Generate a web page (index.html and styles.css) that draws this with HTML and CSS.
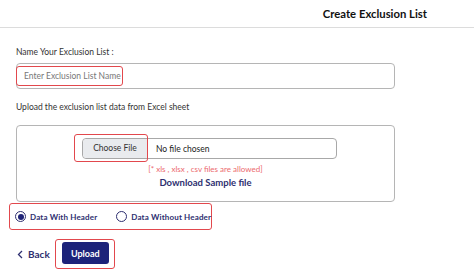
FILE: index.html
```html
<!DOCTYPE html>
<html lang="en">
<head>
    <meta charset="UTF-8">
    <title>Create Exclusion List</title>
    <link rel="stylesheet" href="styles.css">
</head>
<body>
    <header class="topbar">
        <h1>Create Exclusion List</h1>
    </header>

    <div class="content">
        <label class="field-label">Name Your Exclusion List :</label>
        <div class="text-field">
            <span class="mark placeholder">Enter Exclusion List Name</span>
        </div>

        <label class="field-label second">Upload the exclusion list data from Excel sheet</label>
        <div class="upload-box">
            <div class="file-input">
                <span class="choose-btn">Choose File</span>
                <span class="file-name">No file chosen</span>
            </div>
            <p class="hint">[* xls , xlsx , csv files are allowed]</p>
            <a href="#" class="sample-link">Download Sample file</a>
        </div>

        <div class="radio-group">
            <span class="radio checked"></span>
            <span class="radio-label">Data With Header</span>
            <span class="radio"></span>
            <span class="radio-label last">Data Without Header</span>
        </div>

        <div class="actions">
            <a href="#" class="back">
                <svg width="6" height="9" viewBox="0 0 6 9"><path d="M5 1 L1.5 4.5 L5 8" fill="none" stroke="#2e2f70" stroke-width="1.3"/></svg>
                Back
            </a>
            <span class="btn-mark"><button class="upload-btn">Upload</button></span>
        </div>
    </div>
</body>
</html>
```

FILE: styles.css
```css
body {
    margin: 0;
    font-family: "Lato", "Noto Sans", sans-serif;
    background: #fff;
    color: #333;
}
.topbar {
    height: 27px;
    border-bottom: 1px solid #dcdcdc;
    display: flex;
    justify-content: flex-end;
    align-items: center;
    padding-right: 47px;
}
.topbar h1 {
    margin: 0;
    font-size: 11.3px;
    font-weight: 700;
    color: #111;
}
.content {
    width: 379px;
    padding: 18px 0 0 16px;
}
.field-label {
    display: block;
    font-size: 8.5px;
    line-height: 12px;
    color: #333;
    white-space: nowrap;
}
.field-label.second {
    margin-top: 12px;
}
.text-field {
    margin-top: 5px;
    height: 24px;
    border: 1px solid #b5b5b5;
    border-radius: 4px;
    display: flex;
    align-items: center;
}
.mark {
    border: 1.5px solid #e2484d;
    border-radius: 3px;
}
.placeholder {
    height: 18px;
    width: 98px;
    margin-left: -1px;
    padding-left: 7px;
    font-size: 8.5px;
    line-height: 18px;
    color: #777;
    white-space: nowrap;
}
.upload-box {
    margin-top: 12px;
    height: 75px;
    border: 1px solid #b5b5b5;
    border-radius: 4px;
    display: flex;
    flex-direction: column;
    align-items: center;
}
.file-input {
    margin-top: 12px;
    margin-left: 8px;
    width: 253px;
    height: 19px;
    border: 1px solid #a8a8a8;
    border-radius: 4px;
    display: flex;
    align-items: center;
    font-size: 8.5px;
}
.choose-btn {
    position: relative;
    width: 64px;
    height: 19px;
    line-height: 19px;
    text-align: center;
    background: #e9ebee;
    border-right: 1px solid #a8a8a8;
    border-radius: 4px 0 0 4px;
    color: #333;
}
.choose-btn::after {
    content: "";
    position: absolute;
    left: -9px;
    top: -5px;
    right: -1px;
    bottom: -4px;
    border: 1.5px solid #e2484d;
    border-radius: 3px;
}
.file-name {
    margin-left: 8px;
    color: #222;
}
.hint {
    margin: 5px 0 0;
    font-size: 8px;
    line-height: 10px;
    color: #ec6a6e;
    white-space: nowrap;
}
.sample-link {
    margin-top: 2px;
    font-size: 9.5px;
    line-height: 13px;
    color: #2e2f70;
    font-weight: 700;
    text-decoration: none;
    white-space: nowrap;
}
.radio-group {
    margin-left: -7px;
    margin-top: 1px;
    width: max-content;
    height: 25px;
    border: 1.5px solid #e2484d;
    border-radius: 3px;
    display: flex;
    align-items: center;
    padding-left: 5px;
    font-size: 8px;
    color: #2e2f70;
}
.radio {
    width: 9px;
    height: 9px;
    border: 1.5px solid #2e2f70;
    border-radius: 50%;
    box-sizing: content-box;
    position: relative;
}
.radio.checked::after {
    content: "";
    position: absolute;
    left: 1.5px;
    top: 1.5px;
    width: 6px;
    height: 6px;
    border-radius: 50%;
    background: #1f2478;
}
.radio-label {
    margin-left: 4px;
    margin-right: 19px;
    font-weight: 700;
    letter-spacing: 0.15px;
    white-space: nowrap;
}
.radio-label.last {
    margin-right: 0;
}
.actions {
    margin-top: 9px;
    display: flex;
    align-items: center;
}
.back {
    display: flex;
    align-items: center;
    gap: 5px;
    margin-left: 1px;
    font-size: 10px;
    color: #2e2f70;
    text-decoration: none;
    font-weight: 700;
    white-space: nowrap;
}
.btn-mark {
    margin-left: 5px;
    padding: 2px 5px 4px 6px;
    border: 1.5px solid #e2484d;
    border-radius: 3px;
}
.upload-btn {
    display: block;
    width: 47px;
    height: 22px;
    border: none;
    border-radius: 3px;
    background: #1c237a;
    color: #fff;
    font-family: inherit;
    font-size: 9px;
    font-weight: 700;
}
```
